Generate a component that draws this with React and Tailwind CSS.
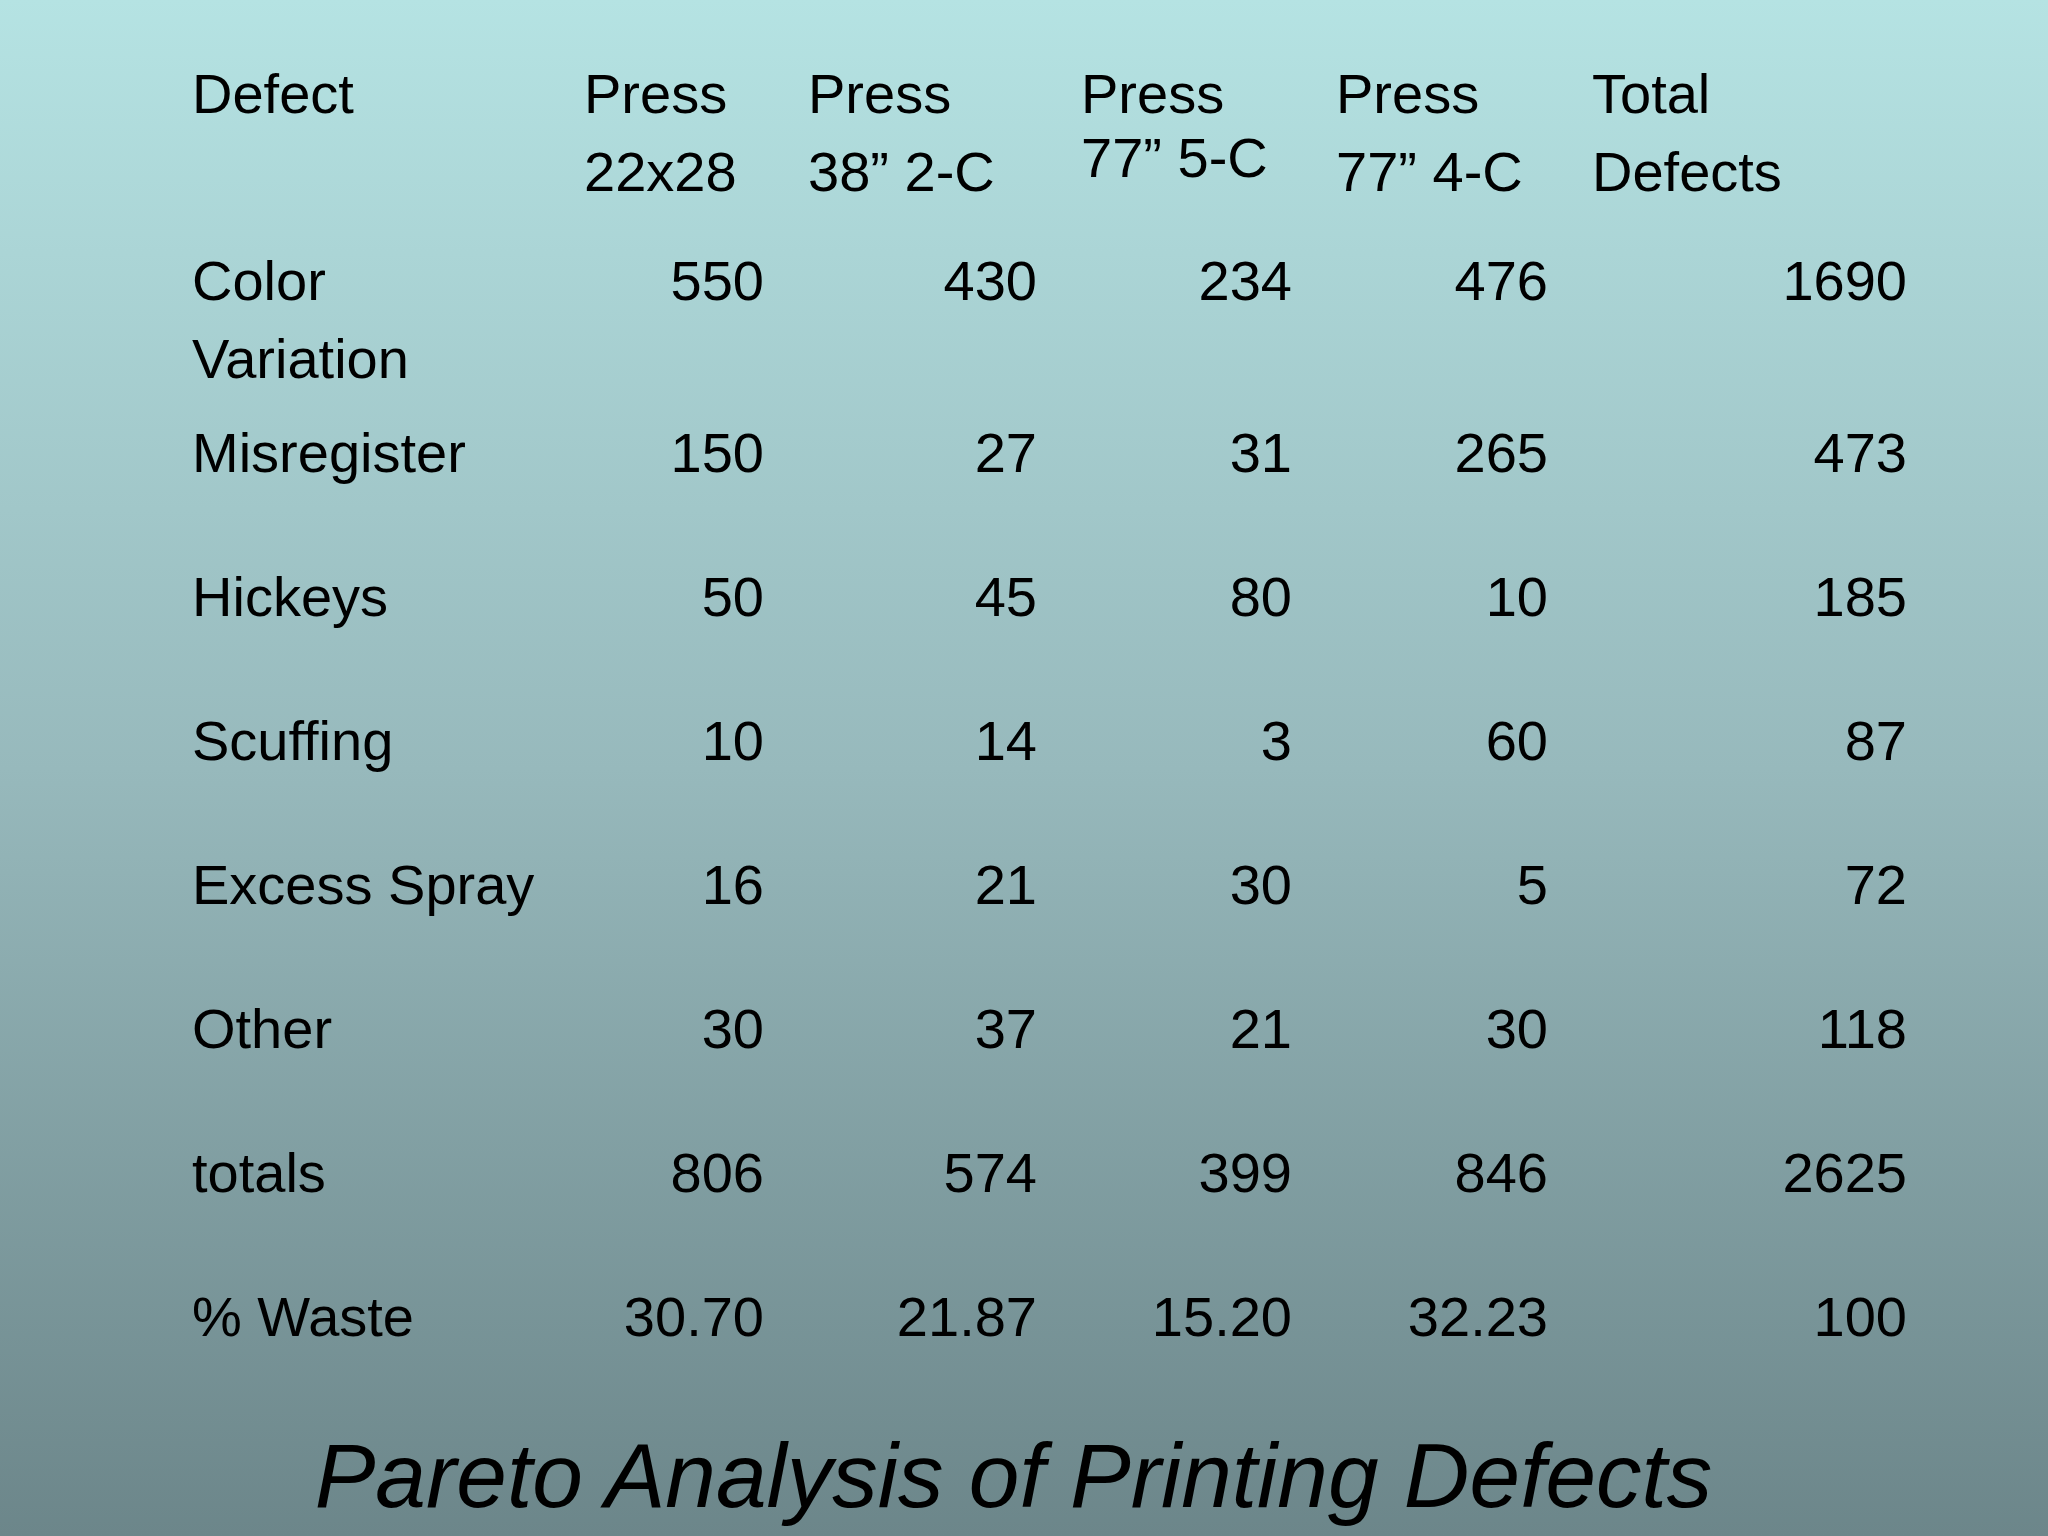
const columns = ["Press 22x28", "Press 38” 2-C", "Press 77” 5-C", "Press 77” 4-C", "Total Defects"];

const rows = [
    { name: ["Color", "Variation"], values: ["550", "430", "234", "476", "1690"], height: "h-[172px]" },
    { name: ["Misregister"], values: ["150", "27", "31", "265", "473"], height: "h-[144px]" },
    { name: ["Hickeys"], values: ["50", "45", "80", "10", "185"], height: "h-[144px]" },
    { name: ["Scuffing"], values: ["10", "14", "3", "60", "87"], height: "h-[144px]" },
    { name: ["Excess Spray"], values: ["16", "21", "30", "5", "72"], height: "h-[144px]" },
    { name: ["Other"], values: ["30", "37", "21", "30", "118"], height: "h-[144px]" },
    { name: ["totals"], values: ["806", "574", "399", "846", "2625"], height: "h-[144px]" },
    { name: ["% Waste"], values: ["30.70", "21.87", "15.20", "32.23", "100"], height: "h-[144px]" },
];

// column tracks: defect | 22x28 | 38" | 77" 5-C | 77" 4-C | total
const grid = "grid grid-cols-[392px_224px_273px_255px_256px_359px]";

export default function App() {
    return (
        <div
            className="w-[2048px] h-[1536px] overflow-hidden bg-gradient-to-b from-[#b5e3e3] via-[#97b9bc] to-[#6c868a] text-black"
            style={{ fontFamily: '"Liberation Sans", Arial, sans-serif' }}
        >
            <div className="pl-[192px] pt-[55px]">
                {/* header */}
                <div className={`${grid} h-[187px] text-[56px] leading-[78px] items-start`}>
                    <div>Defect</div>
                    <div>Press<br />22x28</div>
                    <div>Press<br />38” 2-C</div>
                    <div className="pt-[7px] leading-[64px]">Press<br />77” 5-C</div>
                    <div>Press<br />77” 4-C</div>
                    <div>Total<br />Defects</div>
                </div>

                {rows.map((row) => (
                    <div
                        key={row.name.join(" ")}
                        className={`${grid} ${row.height} text-[56px] leading-[78px] items-start`}
                    >
                        <div>
                            {row.name.map((line, i) => (
                                <div key={i}>{line}</div>
                            ))}
                        </div>
                        {row.values.map((v, i) => (
                            <div key={i} className="text-right pr-[44px]">
                                {v}
                            </div>
                        ))}
                    </div>
                ))}
            </div>

            <div className="mt-[8px] pr-[21px] text-center text-[91px] leading-[91px] italic">
                Pareto Analysis of Printing Defects
            </div>
        </div>
    );
}
